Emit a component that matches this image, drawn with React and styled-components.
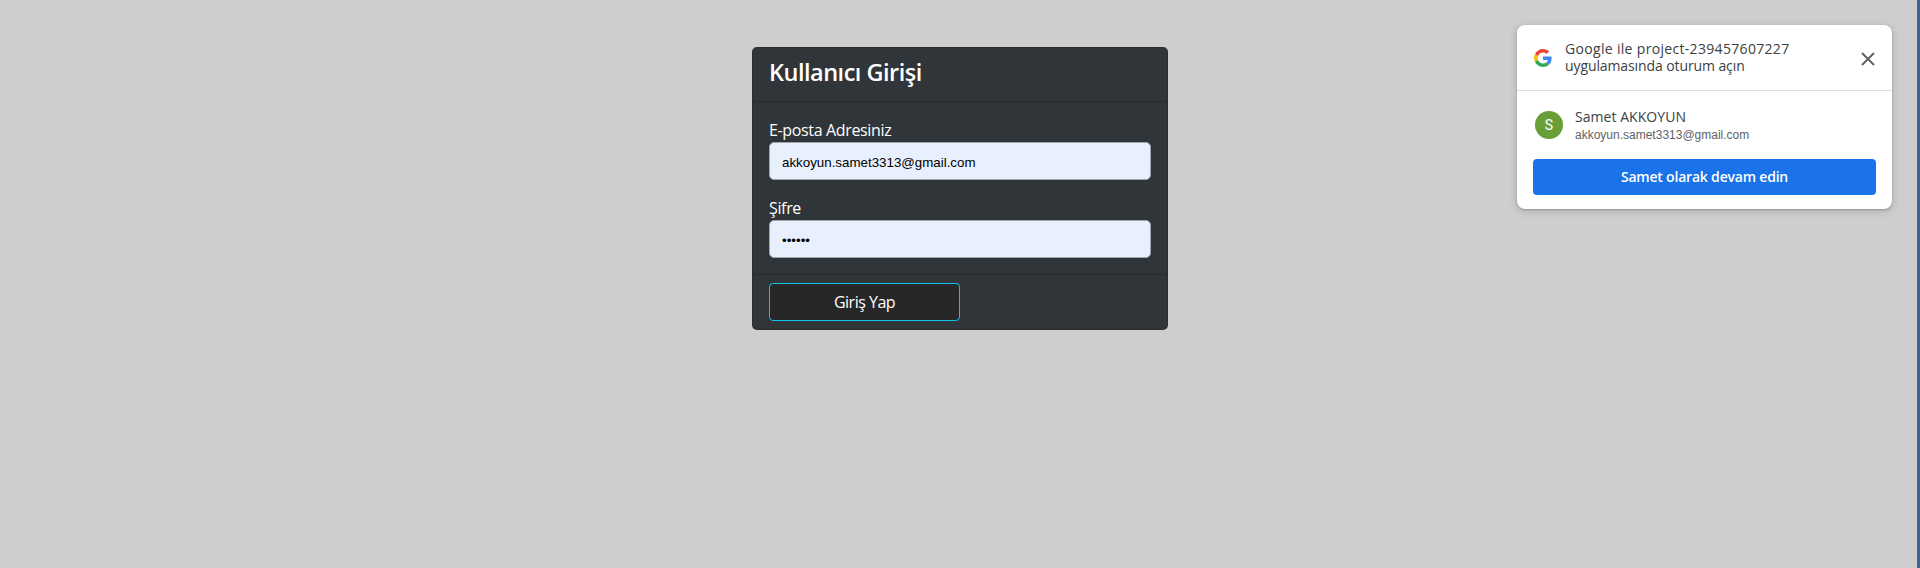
import React from 'react';
import styled, { createGlobalStyle } from 'styled-components';

const Global = createGlobalStyle`
  html, body { margin: 0; height: 100%; background: #cecece; }
  #root { height: 100%; }
  * { box-sizing: border-box; }
`;

const Page = styled.div`
  position: relative;
  height: 568px;
  padding-top: 47px;
  overflow: hidden;
  background: #cecece;
  font-family: "Open Sans", "Noto Sans", sans-serif;
`;

const EdgeStrip = styled.div`
  position: absolute;
  top: 0;
  right: 0;
  bottom: 0;
  width: 3px;
  background: #3a6690;
`;

const Card = styled.form`
  width: 416px;
  margin: 0 auto;
  background: #2f3538;
  border: 1px solid rgba(0, 0, 0, 0.125);
  border-radius: 5px;
  color: #fff;
`;

const CardHeader = styled.header`
  height: 54px;
  padding: 0 16px 6px;
  display: flex;
  align-items: center;
  border-bottom: 1px solid #282c2f;
`;

const Title = styled.h4`
  margin: 0;
  font-size: 23.5px;
  font-weight: 600;
  letter-spacing: -0.5px;
  line-height: 28px;
`;

const CardBody = styled.div`
  padding: 16px 16px 0;
`;

const Field = styled.div`
  margin-bottom: 16px;
`;

const Label = styled.label`
  display: block;
  height: 24px;
  font-size: 16px;
  line-height: 24px;
  letter-spacing: -0.35px;
`;

const Input = styled.input`
  display: block;
  width: 100%;
  height: 38px;
  padding: 2px 12px 0;
  background: #e8f0fe;
  border: 1px solid #9fa6ac;
  border-radius: 5px;
  color: #000;
  font-family: "Liberation Sans", Arial, sans-serif;
  font-size: 13.33px;
  outline: none;
`;

const CardFooter = styled.footer`
  height: 55px;
  padding: 8px 16px;
  border-top: 1px solid #282c2f;
`;

const SubmitButton = styled.button`
  display: block;
  width: 191px;
  height: 38px;
  padding: 0;
  background: #272727;
  border: 1px solid #0dc4e8;
  border-radius: 4px;
  color: #fff;
  font-family: inherit;
  font-size: 16px;
  letter-spacing: -0.5px;
`;

const Popup = styled.aside`
  position: absolute;
  top: 25px;
  left: 1517px;
  width: 375px;
  height: 184px;
  background: #fff;
  border-radius: 8px;
  box-shadow: 0 1px 2px rgba(60, 64, 67, 0.3), 0 2px 6px 2px rgba(60, 64, 67, 0.15);
  color: #3c4043;
  font-family: "Open Sans", Roboto, sans-serif;
`;

const PopupHeader = styled.div`
  height: 66px;
  padding: 0 16px;
  display: flex;
  align-items: center;
  border-bottom: 1px solid #dadce0;
`;

const GoogleLogo = styled.svg`
  width: 18px;
  height: 18px;
  flex: none;
  margin: 0 13px 0 1px;
`;

const PopupTitle = styled.div`
  flex: 1;
  margin-top: -1px;
  font-size: 14px;
  line-height: 17px;
`;

const TitleLine = styled.div`
  letter-spacing: ${(p) => p.$spacing}px;
`;

const CloseIcon = styled.svg`
  width: 14px;
  height: 14px;
  flex: none;
  margin: 2px 1px 0 0;
`;

const Account = styled.div`
  display: flex;
  align-items: center;
  height: 48px;
  margin-top: 10px;
  padding-left: 18px;
`;

const Avatar = styled.div`
  width: 28px;
  height: 28px;
  flex: none;
  margin-right: 12px;
  border-radius: 50%;
  background: #689f38;
  color: #fff;
  font-family: Roboto, sans-serif;
  font-size: 14px;
  display: flex;
  align-items: center;
  justify-content: center;
`;

const AccountText = styled.div`
  padding-top: 2px;
`;

const AccountName = styled.div`
  font-size: 14px;
  line-height: 17px;
  letter-spacing: 0.05px;
`;

const AccountEmail = styled.div`
  margin-top: 2px;
  font-family: "Liberation Sans", Arial, sans-serif;
  font-size: 12px;
  line-height: 17px;
  color: #5f6368;
`;

const ContinueButton = styled.button`
  display: block;
  width: 343px;
  height: 36px;
  margin: 10px 0 0 16px;
  padding: 0 0 2px;
  background: #1a73e8;
  border: 0;
  border-radius: 4px;
  color: #fff;
  font-family: inherit;
  font-size: 14px;
  font-weight: 600;
  letter-spacing: -0.2px;
`;

export default function App() {
  return (
    <Page>
      <Global />
      <Card onSubmit={(e) => e.preventDefault()}>
        <CardHeader>
          <Title>Kullanıcı Girişi</Title>
        </CardHeader>
        <CardBody>
          <Field>
            <Label>E-posta Adresiniz</Label>
            <Input type="email" defaultValue="akkoyun.samet3313@gmail.com" />
          </Field>
          <Field>
            <Label>Şifre</Label>
            <Input type="password" defaultValue="123456" />
          </Field>
        </CardBody>
        <CardFooter>
          <SubmitButton type="submit">Giriş Yap</SubmitButton>
        </CardFooter>
      </Card>

      <Popup>
        <PopupHeader>
          <GoogleLogo viewBox="0 0 48 48">
            <path fill="#EA4335" d="M24 9.5c3.54 0 6.71 1.22 9.21 3.6l6.85-6.85C35.9 2.38 30.47 0 24 0 14.62 0 6.51 5.38 2.56 13.22l7.98 6.19C12.43 13.72 17.74 9.5 24 9.5z" />
            <path fill="#4285F4" d="M46.98 24.55c0-1.57-.15-3.09-.38-4.55H24v9.02h12.94c-.58 2.96-2.26 5.48-4.78 7.18l7.73 6c4.51-4.18 7.09-10.36 7.09-17.65z" />
            <path fill="#FBBC05" d="M10.53 28.59c-.48-1.45-.76-2.99-.76-4.59s.27-3.14.76-4.59l-7.98-6.19C.92 16.46 0 20.12 0 24c0 3.88.92 7.54 2.56 10.78l7.97-6.19z" />
            <path fill="#34A853" d="M24 48c6.48 0 11.93-2.13 15.89-5.81l-7.73-6c-2.15 1.45-4.92 2.3-8.16 2.3-6.26 0-11.57-4.22-13.47-9.91l-7.98 6.19C6.51 42.62 14.62 48 24 48z" />
          </GoogleLogo>
          <PopupTitle>
            <TitleLine $spacing={0.32}>Google ile project-239457607227</TitleLine>
            <TitleLine $spacing={-0.1}>uygulamasında oturum açın</TitleLine>
          </PopupTitle>
          <CloseIcon viewBox="0 0 14 14">
            <path d="M1 1 13 13M13 1 1 13" stroke="#5f6368" strokeWidth="2" fill="none" />
          </CloseIcon>
        </PopupHeader>
        <Account>
          <Avatar>S</Avatar>
          <AccountText>
            <AccountName>Samet AKKOYUN</AccountName>
            <AccountEmail>akkoyun.samet3313@gmail.com</AccountEmail>
          </AccountText>
        </Account>
        <ContinueButton type="button">Samet olarak devam edin</ContinueButton>
      </Popup>
      <EdgeStrip />
    </Page>
  );
}
